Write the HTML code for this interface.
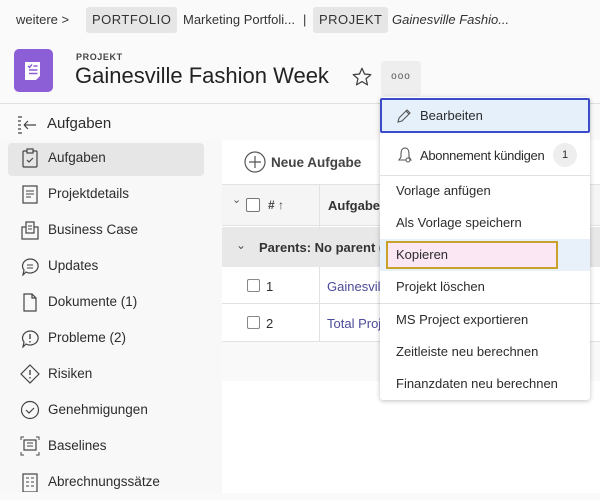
<!DOCTYPE html><html><head><meta charset="utf-8"><style>
*{box-sizing:border-box;margin:0;padding:0}
body{width:600px;height:493px;overflow:hidden;background:#fafafa;font-family:"Liberation Sans",sans-serif;color:#2c2c2c;position:relative;font-size:13px}
.a{position:absolute;white-space:nowrap}
.crumb{top:7px;height:26px;line-height:26px;font-size:13px;color:#333}
.box{background:#e6e6e6;padding:0 6px;border-radius:3px;letter-spacing:.5px}
.nav{left:0;width:222px;height:36px;line-height:36px}
.nav span{position:absolute;left:48px;font-size:13.5px}
.nav svg{position:absolute;left:20px;top:8px}
.mi{left:380px;width:210px;height:32px;line-height:32px;padding-left:16px;font-size:13px}
.sep{left:380px;width:210px;height:1px;background:#e1e1e1}
</style></head><body>
<div class="a crumb" style="left:16px">weitere &gt;</div>
<div class="a crumb box" style="left:86px">PORTFOLIO</div>
<div class="a crumb" style="left:183px">Marketing Portfoli...</div>
<div class="a crumb" style="left:303px">|</div>
<div class="a crumb box" style="left:313px">PROJEKT</div>
<div class="a crumb" style="left:392px;font-style:italic">Gainesville Fashio...</div>

<div class="a" style="left:14px;top:49px;width:39px;height:43px;background:#8c5fd6;border-radius:5px">
<svg width="39" height="43"><path d="M11 13h15v14l-4 4H11z" fill="#fff"/><path d="M14 17l1.5 1.5 2.5-3M19.5 17h4M15 21h8.5M15 24.5h8.5" stroke="#8c5fd6" stroke-width="1.4" fill="none"/></svg></div>
<div class="a" style="left:76px;top:52px;font-size:9px;letter-spacing:.6px;font-weight:bold;color:#444">PROJEKT</div>
<div class="a" style="left:75px;top:63px;font-size:22px;color:#222">Gainesville Fashion Week</div>
<svg class="a" style="left:351px;top:66px" width="22" height="22" viewBox="0 0 24 24"><path d="M12 2.5l2.8 6.3 6.8.6-5.2 4.5 1.6 6.7L12 17l-6 3.6 1.6-6.7L2.4 9.4l6.8-.6z" fill="none" stroke="#444" stroke-width="1.4" stroke-linejoin="round"/></svg>
<div class="a" style="left:381px;top:61px;width:40px;height:35px;background:#eee;border-radius:3px;text-align:center;line-height:32px;font-size:10px;color:#555;letter-spacing:1px">ooo</div>
<div class="a" style="left:0;top:103px;width:600px;height:1px;background:#e0e0e0"></div>

<svg class="a" style="left:16px;top:115px" width="24" height="20"><path d="M2 2h4M2 6h3M2 10h3M2 14h3M2 18h4M8 10h12M8 10l4-4M8 10l4 4" stroke="#444" stroke-width="1.2" fill="none"/></svg>
<div class="a" style="left:47px;top:115px;font-size:15px">Aufgaben</div>

<div class="a" style="left:0;top:140px;width:222px;height:353px;background:#f8f8f8"></div>
<div class="a" style="left:8px;top:143px;width:196px;height:33px;background:#e6e6e6;border-radius:4px"></div>
<div class="a nav" style="top:140px"><svg width="20" height="20"><rect x="3" y="3" width="14" height="16" rx="1" fill="none" stroke="#444" stroke-width="1.2"/><rect x="7" y="1" width="6" height="4" fill="#e6e6e6" stroke="#444" stroke-width="1.2"/><path d="M7 12l2 2 4-4" stroke="#444" fill="none" stroke-width="1.2"/></svg><span>Aufgaben</span></div>
<div class="a nav" style="top:176px"><svg width="20" height="20"><rect x="3" y="2" width="14" height="17" fill="none" stroke="#444" stroke-width="1.2"/><path d="M6 7h8M6 10h8M6 13h5" stroke="#444"/></svg><span>Projektdetails</span></div>
<div class="a nav" style="top:212px"><svg width="20" height="20"><rect x="2" y="7" width="16" height="12" fill="none" stroke="#444" stroke-width="1.2"/><rect x="6" y="2" width="8" height="11" fill="#f8f8f8" stroke="#444" stroke-width="1.2"/><path d="M8 6h4M8 9h4" stroke="#444"/></svg><span>Business Case</span></div>
<div class="a nav" style="top:248px"><svg width="20" height="20"><path d="M10 3a8 7 0 1 1-4 13l-3 3 1-5A8 7 0 0 1 10 3z" fill="none" stroke="#444" stroke-width="1.2"/><path d="M7 9h6M7 12h6" stroke="#444"/></svg><span>Updates</span></div>
<div class="a nav" style="top:284px"><svg width="20" height="20"><path d="M4 2h8l4 4v13H4z M12 2v4h4" fill="none" stroke="#444" stroke-width="1.2"/></svg><span>Dokumente (1)</span></div>
<div class="a nav" style="top:320px"><svg width="20" height="20"><path d="M10 3a8 7 0 1 1-4 13l-3 3 1-5A8 7 0 0 1 10 3z" fill="none" stroke="#444" stroke-width="1.2"/><path d="M10 6v5M10 13v1.5" stroke="#444" stroke-width="1.4"/></svg><span>Probleme (2)</span></div>
<div class="a nav" style="top:356px"><svg width="20" height="20"><path d="M10 1l9 9-9 9-9-9z" fill="none" stroke="#444" stroke-width="1.2"/><path d="M10 6v5M10 13v1.5" stroke="#444" stroke-width="1.4"/></svg><span>Risiken</span></div>
<div class="a nav" style="top:392px"><svg width="20" height="20"><circle cx="10" cy="10" r="8.5" fill="none" stroke="#444" stroke-width="1.2"/><path d="M6 10l3 3 5-5" stroke="#444" fill="none" stroke-width="1.2"/></svg><span>Genehmigungen</span></div>
<div class="a nav" style="top:428px"><svg width="20" height="20"><path d="M1 4V1h3M16 1h3v3M1 16v3h3M16 19h3v-3" stroke="#444" fill="none"/><rect x="4" y="4" width="12" height="10" fill="none" stroke="#444" stroke-width="1.2"/><path d="M7 7h6M7 10h6" stroke="#444"/></svg><span>Baselines</span></div>
<div class="a nav" style="top:464px"><svg width="20" height="20"><rect x="3" y="2" width="14" height="18" fill="none" stroke="#444" stroke-width="1.2"/><path d="M6 6h3M11 6h3M6 10h3M11 10h3M6 14h3M11 14h3" stroke="#444"/></svg><span>Abrechnungssätze</span></div>

<div class="a" style="left:222px;top:140px;width:378px;height:353px;background:#fff"></div>
<div class="a" style="left:222px;top:341px;width:378px;height:40px;background:#f9f9f9"></div>
<svg class="a" style="left:244px;top:151px" width="22" height="22"><circle cx="11" cy="11" r="10" fill="none" stroke="#555" stroke-width="1.2"/><path d="M11 5v12M5 11h12" stroke="#555" stroke-width="1.2"/></svg>
<div class="a" style="left:271px;top:155px;font-size:13.5px;font-weight:bold;color:#444">Neue Aufgabe</div>
<div class="a" style="left:222px;top:184px;width:378px;height:42px;background:#f5f5f5;border-top:1px solid #e2e2e2;border-bottom:1px solid #e2e2e2"></div>
<div class="a" style="left:319px;top:184px;width:1px;height:158px;background:#e2e2e2"></div>
<div class="a" style="left:232px;top:193px;font-size:11px;color:#555">⌄</div>
<div class="a" style="left:246px;top:198px;width:14px;height:14px;border:1.3px solid #777;border-radius:2px;background:#fff"></div>
<div class="a" style="left:268px;top:198px;font-size:12px;font-weight:bold;color:#444">#&nbsp;↑</div>
<div class="a" style="left:328px;top:198px;font-size:13px;font-weight:bold;color:#333">Aufgaben</div>
<div class="a" style="left:222px;top:227px;width:378px;height:40px;background:#e8e8e8"></div>
<div class="a" style="left:236px;top:238px;font-size:12px;color:#555">⌄</div>
<div class="a" style="left:259px;top:240px;font-size:13px;font-weight:bold;color:#333">Parents: No parent (</div>
<div class="a" style="left:222px;top:303px;width:378px;height:1px;background:#e2e2e2"></div>
<div class="a" style="left:222px;top:341px;width:378px;height:1px;background:#e2e2e2"></div>
<div class="a" style="left:247px;top:279px;width:13px;height:13px;border:1.3px solid #888;border-radius:2px"></div>
<div class="a" style="left:266px;top:279px">1</div>
<div class="a" style="left:327px;top:279px;color:#4b4b9a">Gainesvil</div>
<div class="a" style="left:247px;top:316px;width:13px;height:13px;border:1.3px solid #888;border-radius:2px"></div>
<div class="a" style="left:266px;top:316px">2</div>
<div class="a" style="left:327px;top:316px;color:#4b4b9a">Total Proj</div>

<div class="a" style="left:380px;top:97px;width:210px;height:303px;background:#fff;box-shadow:0 1px 5px rgba(0,0,0,.25);border-radius:3px"></div>
<div class="a" style="left:380px;top:98px;width:210px;height:35px;background:#e5f0fb;border:2px solid #3c4bc8;border-radius:2px"></div>
<svg class="a" style="left:396px;top:108px" width="16" height="16"><path d="M2 14l1-4 8-8 3 3-8 8z M10 3l3 3" fill="none" stroke="#555" stroke-width="1.1"/></svg>
<div class="a" style="left:420px;top:108px;font-size:13px">Bearbeiten</div>
<svg class="a" style="left:397px;top:146px" width="16" height="18"><path d="M8 2c-3 0-4 3-4 6v3l-2 3h12l-2-3V8c0-3-1-6-4-6z" fill="none" stroke="#555" stroke-width="1.1"/><circle cx="11" cy="14" r="2" fill="#fff" stroke="#555"/></svg>
<div class="a" style="left:420px;top:148px;font-size:13px;letter-spacing:-.3px">Abonnement kündigen</div>
<div class="a" style="left:553px;top:143px;width:24px;height:24px;border-radius:12px;background:#eee;text-align:center;line-height:24px;font-size:11px">1</div>
<div class="sep a" style="top:175px"></div>
<div class="a mi" style="top:175px">Vorlage anfügen</div>
<div class="a mi" style="top:207px">Als Vorlage speichern</div>
<div class="a" style="left:380px;top:239px;width:210px;height:32px;background:#e8f1fa"></div>
<div class="a" style="left:386px;top:241px;width:172px;height:28px;background:#fbe6f4;border:2.5px solid #c8a22a"></div>
<div class="a mi" style="top:239px">Kopieren</div>
<div class="a mi" style="top:271px">Projekt löschen</div>
<div class="sep a" style="top:303px"></div>
<div class="a mi" style="top:304px">MS Project exportieren</div>
<div class="a mi" style="top:336px">Zeitleiste neu berechnen</div>
<div class="a mi" style="top:368px">Finanzdaten neu berechnen</div>
</body></html>
